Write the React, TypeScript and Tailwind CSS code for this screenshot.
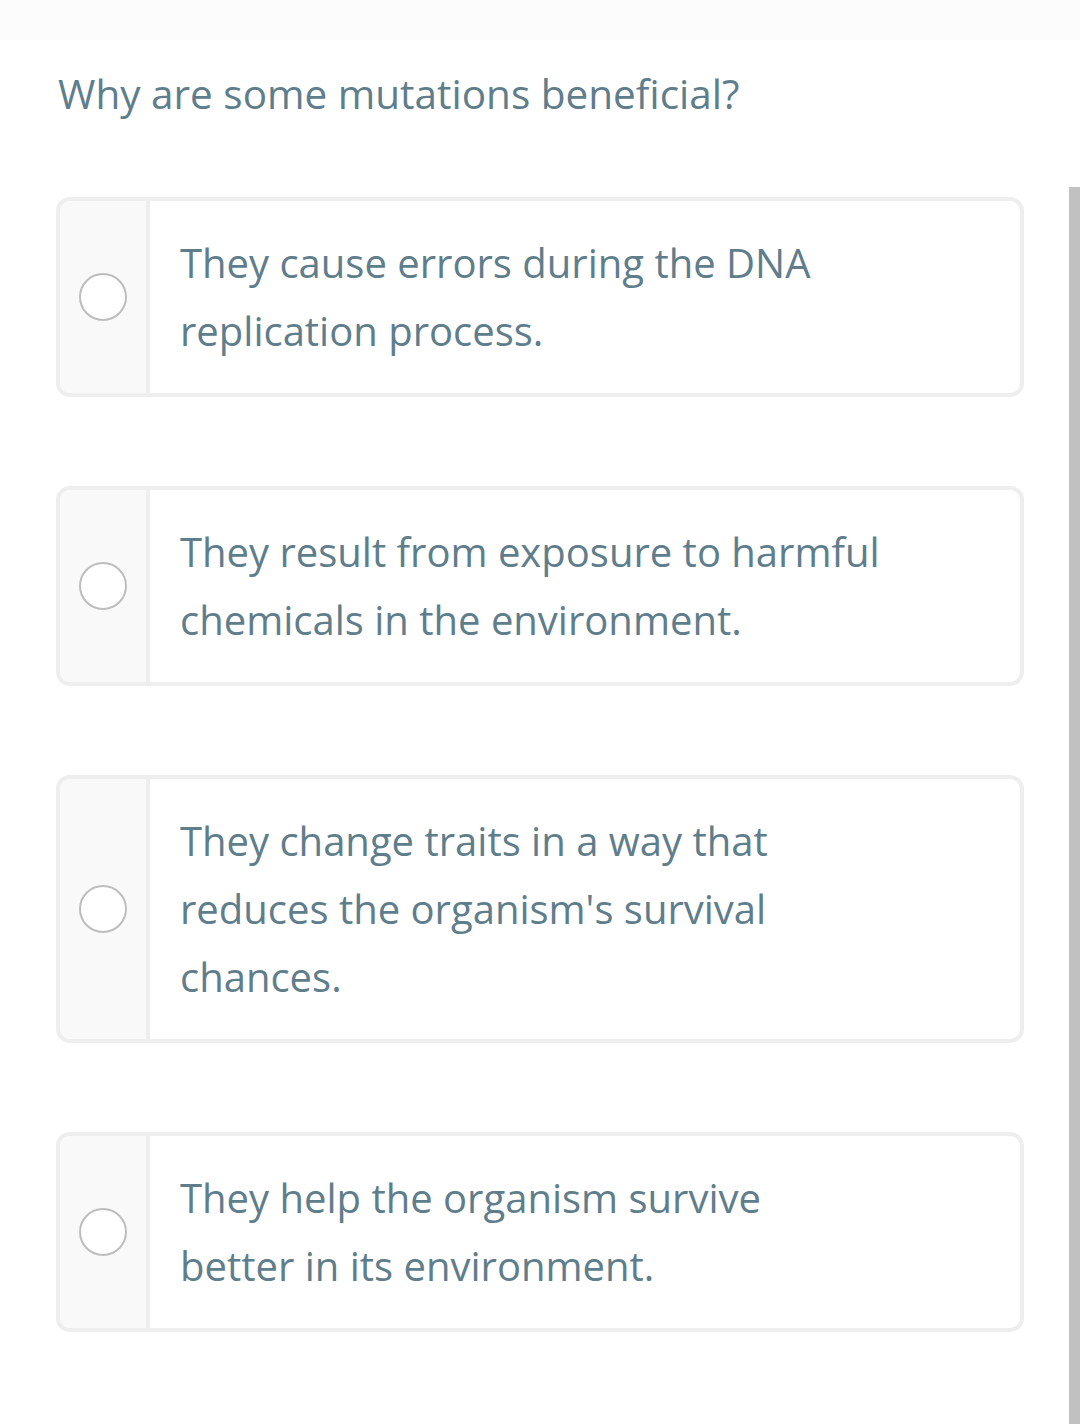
const question = "Why are some mutations beneficial?";

const options = [
  "They cause errors during the DNA replication process.",
  "They result from exposure to harmful chemicals in the environment.",
  "They change traits in a way that reduces the organism's survival chances.",
  "They help the organism survive better in its environment.",
];

function OptionCard({ text }: { text: string }) {
  return (
    <div className="flex overflow-hidden rounded-[14px] border-4 border-[#eeeeee] bg-white">
      <div className="flex w-[90px] shrink-0 items-center justify-center border-r-4 border-[#eeeeee] bg-[#f9f9f9]">
        <span className="block h-[48px] w-[48px] rounded-full border-2 border-[#bdbdbd] bg-white" />
      </div>
      <div className="py-[28px] pl-[30px] pr-[40px]">
        <p className="w-[702px] text-[40px] leading-[68px] text-[#607d8b]">{text}</p>
      </div>
    </div>
  );
}

export default function App() {
  return (
    <div
      className="relative min-h-[1424px] bg-white"
      style={{ fontFamily: "'Open Sans', sans-serif" }}
    >
      <div className="h-[40px] bg-[#fcfcfc]" />
      <h1 className="mt-[26px] px-[58px] text-[40.5px] leading-[56px] text-[#607d8b]">{question}</h1>
      <div className="mt-[75px] flex flex-col gap-[89px] px-[56px]">
        {options.map((o, i) => (
          <OptionCard key={i} text={o} />
        ))}
      </div>
      <div className="absolute right-0 top-[187px] bottom-0 w-[11px] bg-[#c1c1c1]" />
    </div>
  );
}
